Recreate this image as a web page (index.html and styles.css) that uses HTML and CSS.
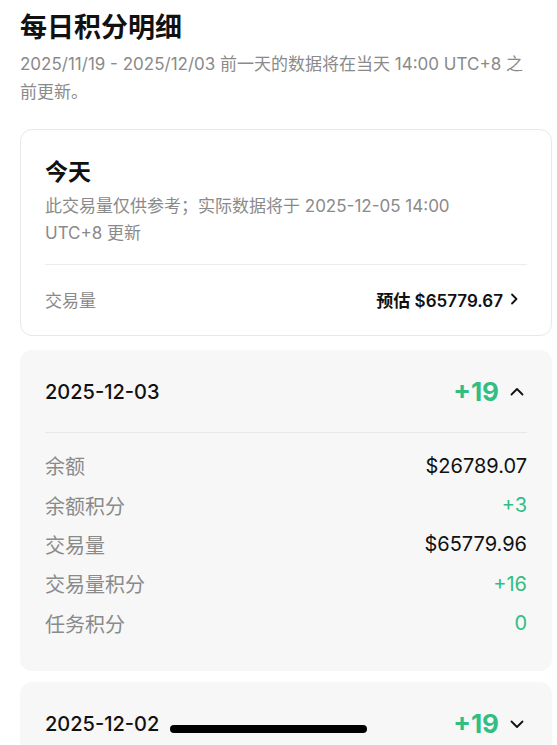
FILE: index.html
```html
<!DOCTYPE html>
<html>
<head>
    <title>每日积分明细</title>
    <link rel="stylesheet" href="styles.css">
</head>
<body>
    <div class="page">
        <h1 class="title">每日积分明细</h1>
        <p class="subtitle">2025/11/19 - 2025/12/03 前一天的数据将在当天 14:00 UTC+8 之前更新。</p>

        <!-- Today card -->
        <div class="today-card">
            <h2 class="today-title">今天</h2>
            <p class="today-desc">此交易量仅供参考；实际数据将于 2025-12-05 14:00 UTC+8 更新</p>
            <div class="today-row">
                <span class="label">交易量</span>
                <span class="today-value">预估 $65779.67
                    <svg class="chev" width="14" height="14" viewBox="0 0 14 14"><path d="M5 2.5 L9.5 7 L5 11.5" fill="none" stroke="#111" stroke-width="1.8" stroke-linecap="round" stroke-linejoin="round"/></svg>
                </span>
            </div>
        </div>

        <!-- Day cards -->
        <div class="day-card">
            <div class="day-head">
                <span class="day-date">2025-12-03</span>
                <span class="day-total">+19
                    <svg class="chev-v" width="18" height="18" viewBox="0 0 18 18"><path d="M3.5 11.5 L9 6 L14.5 11.5" fill="none" stroke="#111" stroke-width="1.8" stroke-linecap="round" stroke-linejoin="round"/></svg>
                </span>
            </div>
            <div class="day-body">
                <div class="day-row"><span class="label">余额</span><span class="val">$26789.07</span></div>
                <div class="day-row"><span class="label">余额积分</span><span class="val green">+3</span></div>
                <div class="day-row"><span class="label">交易量</span><span class="val">$65779.96</span></div>
                <div class="day-row"><span class="label">交易量积分</span><span class="val green">+16</span></div>
                <div class="day-row"><span class="label">任务积分</span><span class="val green">0</span></div>
            </div>
        </div>

        <div class="day-card next">
            <div class="day-head">
                <span class="day-date">2025-12-02</span>
                <span class="day-total">+19
                    <svg class="chev-v" width="18" height="18" viewBox="0 0 18 18"><path d="M3.5 6.5 L9 12 L14.5 6.5" fill="none" stroke="#111" stroke-width="1.8" stroke-linecap="round" stroke-linejoin="round"/></svg>
                </span>
            </div>
        </div>
    </div>
    <div class="home-bar"></div>
</body>
</html>
```

FILE: styles.css
```css
body{
    margin:0;
    background:#fff;
    color:#111;
    font-family:Inter, "Noto Sans CJK SC", sans-serif;
    overflow:hidden;
}
.page{
    padding:10px 5px 0 20px;
}
.title{
    margin:0;
    font-size:27px;
    line-height:36px;
    font-weight:700;
}
.subtitle{
    margin:4px 0 0;
    font-size:17px;
    line-height:28px;
    color:#8a8a8a;
    padding-right:20px;
}
.today-card{
    margin-top:23px;
    border:1px solid #e8e8e8;
    border-radius:12px;
    padding:27px 24px 2px 24px;
}
.today-title{
    margin:0 0 6px;
    font-size:23px;
    line-height:30px;
    font-weight:700;
}
.today-desc{
    margin:0;
    font-size:17px;
    line-height:27px;
    color:#8a8a8a;
    padding-right:20px;
    padding-bottom:17px;
    border-bottom:1px solid #ececec;
}
.today-row{
    display:flex;
    justify-content:space-between;
    align-items:center;
    height:68px;
}
.today-row .label{
    font-size:17px;
    color:#8a8a8a;
}
.today-value{
    display:flex;
    align-items:center;
    gap:4px;
    font-size:17px;
    font-weight:600;
}
.chev{ margin-right:6px; }
.day-card{
    margin-top:14px;
    background:#f7f7f7;
    border-radius:12px;
    padding:0 25px 28px;
}
.day-card.next{ margin-top:11px; }
.day-head{
    display:flex;
    justify-content:space-between;
    align-items:center;
    padding:28px 0 26px;
    border-bottom:1px solid #e8e8e8;
}
.day-date{
    font-size:20px;
    line-height:28px;
    font-weight:500;
}
.day-total{
    display:flex;
    align-items:center;
    gap:9px;
    font-size:26px;
    line-height:28px;
    font-weight:700;
    color:#32be82;
}
.chev-v{ margin-right:1px; }
.day-body{ padding-top:13px; }
.day-row{
    display:flex;
    justify-content:space-between;
    align-items:center;
    height:39.4px;
    font-size:20px;
}
.day-row .label{ color:#8a8a8a; }
.val{ color:#111; }
.val.green{ color:#32be82; }
.home-bar{
    position:absolute;
    left:170px;
    top:725px;
    width:197px;
    height:8px;
    border-radius:4px;
    background:#000;
}
```
